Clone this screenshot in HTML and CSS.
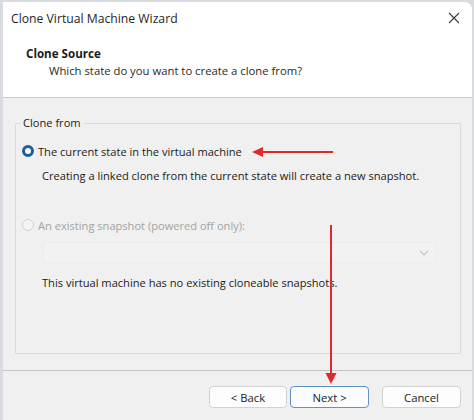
FILE: index.html
```html
<!DOCTYPE html>
<html>
<head>
<meta charset="utf-8">
<link rel="stylesheet" href="styles.css">
</head>
<body>
<div class="page">
  <div class="window">
    <div class="titlebar">
      <span class="title">Clone Virtual Machine Wizard</span>
      <svg class="close" width="12" height="12" viewBox="0 0 12 12"><path d="M1 1L11 11M11 1L1 11" stroke="#3a3a3a" stroke-width="1.1" fill="none"/></svg>
    </div>
    <div class="header">
      <div class="h-title">Clone Source</div>
      <div class="h-sub">Which state do you want to create a clone from?</div>
    </div>
    <div class="content">
      <fieldset class="group">
        <legend>Clone from</legend>
        <div class="option first"><span class="radio on"></span><span>The current state in the virtual machine</span></div>
        <div class="desc">Creating a linked clone from the current state will create a new snapshot.</div>
        <div class="option second disabled"><span class="radio off"></span><span>An existing snapshot (powered off only):</span></div>
        <div class="combo"><svg width="10" height="6" viewBox="0 0 10 6"><path d="M1 1L5 5L9 1" stroke="#c4c4c4" stroke-width="1.1" fill="none"/></svg></div>
        <div class="desc">This virtual machine has no existing cloneable snapshots.</div>
      </fieldset>
    </div>
    <div class="footer">
      <button class="btn">&lt; Back</button>
      <button class="btn primary">Next &gt;</button>
      <button class="btn cancel">Cancel</button>
    </div>
  </div>
  <svg class="annot" width="474" height="420" viewBox="0 0 474 420">
    <line x1="259" y1="152" x2="333" y2="152" stroke="#e02a2a" stroke-width="2"/>
    <polygon points="252,152 263,147 263,157" fill="#e02a2a"/>
    <line x1="331" y1="225" x2="331" y2="376" stroke="#e02a2a" stroke-width="2"/>
    <polygon points="331,384 325.5,373 336.5,373" fill="#e02a2a"/>
  </svg>
</div>
</body>
</html>
```
FILE: styles.css
```css
* { box-sizing: border-box; }
html, body { margin: 0; padding: 0; }
body {
  background: #d8dbe0;
  font-family: "Open Sans", "Noto Sans", sans-serif;
  font-size: 11.1px;
  color: #1b1b1b;
}
.page {
  position: relative;
  width: 474px;
  height: 420px;
  padding: 2px 2px 0 3px;
}
.window {
  width: 469px;
  height: 418px;
  background: #f0f0f0;
  border-top-right-radius: 8px;
  overflow: hidden;
  display: flex;
  flex-direction: column;
}
.titlebar {
  height: 32px;
  background: #fff;
  display: flex;
  align-items: center;
  justify-content: space-between;
  padding: 0 12px 0 8px;
}
.title {
  font-size: 12.2px;
  color: #1f1f1f;
}
.close { display: block; }
.header {
  background: #fff;
  height: 64px;
  border-bottom: 1px solid #c9c9c9;
  padding: 12px 0 0 23px;
}
.h-title {
  font-weight: bold;
  font-size: 11.6px;
  line-height: 16px;
}
.h-sub {
  line-height: 16px;
  padding-left: 23px;
  margin-top: 1px;
  color: #2a2a2a;
  font-size: 11.3px;
}
.content {
  flex: 1;
  padding: 17px 11px 16px 12px;
  display: flex;
}
.group {
  flex: 1;
  margin: 0;
  border: 1px solid #dadada;
  border-radius: 1px;
  padding: 0 0 0 8px;
  min-width: 0;
}
.group legend {
  padding: 0 3px 0 2px;
  margin-left: -3px;
  line-height: 16px;
  color: #222;
}
.option {
  display: flex;
  align-items: center;
  height: 16px;
  gap: 4px;
  margin-left: -2px;
}
.option.first { margin-top: 12px; }
.option.second { margin-top: 33px; }
.option.disabled { color: #a3a3a3; }
.radio {
  width: 12px;
  height: 12px;
  border-radius: 50%;
  flex: none;
}
.radio.on {
  border: 3px solid #1d5d9b;
  background: #f6f8fa;
}
.radio.off {
  border: 1px solid #d3d3d3;
  background: #f4f4f4;
}
.desc {
  line-height: 16px;
  margin-top: 9px;
  padding-left: 18px;
}
.combo {
  margin: 9px 24px 0 19px;
  height: 21px;
  border: 1px solid #ececec;
  background: #f2f2f2;
  display: flex;
  align-items: center;
  justify-content: flex-end;
  padding-right: 6px;
}
.combo + .desc { margin-top: 12px; }
.footer {
  height: 50px;
  border-top: 1px solid #c6c6c6;
  display: flex;
  justify-content: flex-end;
  align-items: flex-start;
  padding: 15px 11px 0 0;
}
.btn {
  width: 78px;
  height: 22px;
  background: #fdfdfd;
  border: 1px solid #d2d2d2;
  border-radius: 4px;
  font-family: inherit;
  font-size: 11.3px;
  color: #1b1b1b;
  padding: 0;
}
.btn.primary {
  width: 79px;
  margin-left: 3px;
  border-color: #5d93c9;
  background: #fbfcfd;
}
.btn.cancel {
  width: 79px;
  margin-left: 13px;
}
.annot {
  position: absolute;
  left: 0;
  top: 0;
}
```
